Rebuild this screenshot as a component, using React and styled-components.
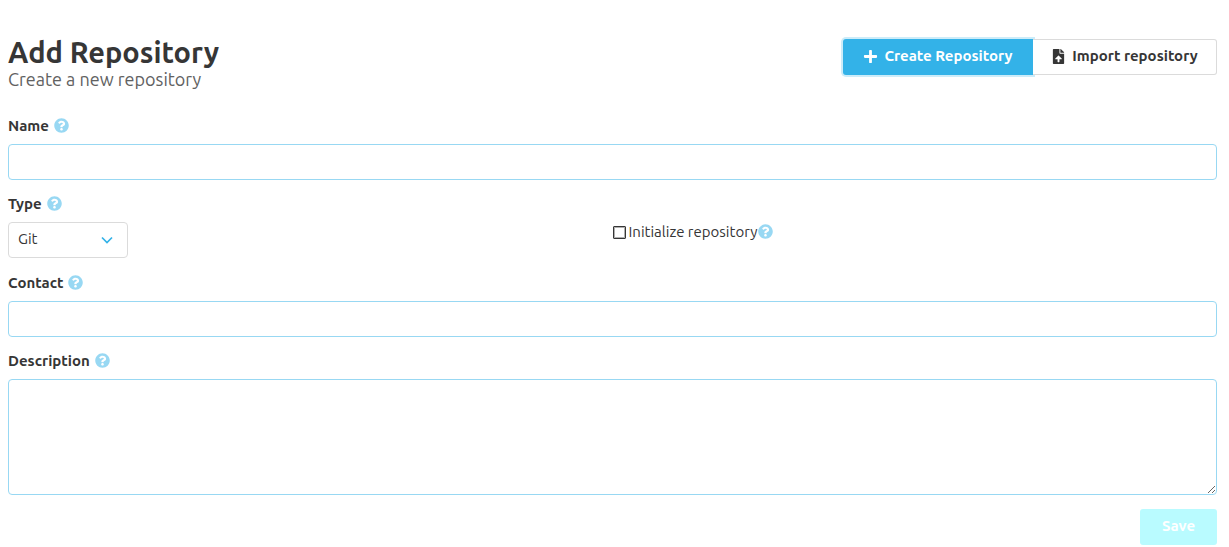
import React from "react";
import styled, { createGlobalStyle } from "styled-components";
import { FaPlus, FaFileUpload, FaQuestionCircle } from "react-icons/fa";

const GlobalStyle = createGlobalStyle`
  *, *::before, *::after { box-sizing: border-box; }
  body {
    margin: 0;
    background: #fff;
    color: #363636;
    font-family: Ubuntu, "Noto Sans", "Open Sans", sans-serif;
    font-size: 15px;
    line-height: 20px;
  }
  button, input, select, textarea { font: inherit; color: inherit; margin: 0; }
`;

const Page = styled.main`
  padding: 36px 12px 2px 8px;
`;

const Header = styled.header`
  display: flex;
  justify-content: space-between;
  align-items: flex-start;
  margin-bottom: 26px;
`;

const Title = styled.h1`
  margin: 0;
  font-size: 29px;
  line-height: 32px;
  font-weight: 700;
`;

const Subtitle = styled.p`
  margin: 0;
  font-size: 18px;
  line-height: 22px;
  color: #616161;
`;

const Tabs = styled.div`
  display: flex;
  padding-top: 3px;
`;

const Button = styled.button`
  display: inline-flex;
  align-items: center;
  justify-content: center;
  gap: 6px;
  height: 36px;
  min-width: ${(p) => p.$width};
  padding: 0 14px 2px;
  border: 1px solid transparent;
  border-radius: 3px;
  font-weight: 700;
  white-space: nowrap;
`;

const CreateTab = styled(Button)`
  border-radius: 3px 0 0 3px;
  background: #33b2e8;
  color: #fff;
  box-shadow: 0 0 0 2px rgba(51, 178, 232, 0.25);
`;

const ImportTab = styled(Button)`
  border-radius: 0 3px 3px 0;
  border-color: #dbdbdb;
  border-left: 0;
  background: #fff;
`;

const SaveButton = styled(Button)`
  background: #b9fbff;
  color: #fff;
`;

const Form = styled.form`
  display: flex;
  flex-direction: column;
  gap: 14px;
`;

const Field = styled.div`
  display: flex;
  flex-direction: column;
  gap: 8px;
`;

const LabelRow = styled.div`
  display: flex;
  align-items: center;
  gap: 5px;
`;

const Label = styled.label`
  font-weight: 700;
`;

const HelpIcon = styled(FaQuestionCircle)`
  flex: none;
  width: 15px;
  height: 15px;
  margin-bottom: 1px;
  color: #98d8f3;
`;

const TextInput = styled.input`
  width: 100%;
  height: 36px;
  padding: 0 10px;
  border: 1px solid #98d8f3;
  border-radius: 4px;
  background: #fff;
`;

const TextArea = styled.textarea`
  display: block;
  width: 100%;
  height: 116px;
  padding: 10px;
  border: 1px solid #98d8f3;
  border-radius: 4px;
  background: #fff;
  resize: vertical;
`;

const TypeRow = styled.div`
  display: grid;
  grid-template-columns: 1fr 1fr;
  min-height: 37px;
`;

const SelectBox = styled.div`
  display: grid;
  width: 120px;
  align-items: center;
  align-self: start;

  > * { grid-area: 1 / 1; }
`;

const Select = styled.select`
  appearance: none;
  width: 100%;
  height: 36px;
  padding: 0 35px 2px 9px;
  border: 1px solid #dbdbdb;
  border-radius: 4px;
  background: #fff;
`;

const Chevron = styled.svg`
  justify-self: end;
  margin-right: 14px;
  pointer-events: none;
`;

const CheckRow = styled.div`
  display: flex;
  align-items: center;
  align-self: start;
  gap: 1px;
  height: 20px;
`;

const CheckLabel = styled.label`
  display: flex;
  align-items: center;
  gap: 3px;
`;

const Checkbox = styled.input`
  appearance: none;
  flex: none;
  width: 13px;
  height: 13px;
  border: 1px solid #363636;
  border-radius: 1px;
  box-shadow: inset 0 0 0 1px rgba(54, 54, 54, 0.4);

  &:checked { background: #33b2e8; }
`;

const Actions = styled.div`
  display: flex;
  justify-content: flex-end;
`;

function FieldLabel({ htmlFor, children }) {
  return (
    <LabelRow>
      <Label htmlFor={htmlFor}>{children}</Label>
      <HelpIcon aria-hidden="true" />
    </LabelRow>
  );
}

export default function App() {
  return (
    <>
      <GlobalStyle />
      <Page>
        <Header>
          <div>
            <Title>Add Repository</Title>
            <Subtitle>Create a new repository</Subtitle>
          </div>
          <Tabs>
            <CreateTab type="button" $width="190px">
              <FaPlus size={15} aria-hidden="true" />
              Create Repository
            </CreateTab>
            <ImportTab type="button" $width="184px">
              <FaFileUpload size={15} aria-hidden="true" />
              Import repository
            </ImportTab>
          </Tabs>
        </Header>
        <Form onSubmit={(e) => e.preventDefault()}>
          <Field>
            <FieldLabel htmlFor="name">Name</FieldLabel>
            <TextInput id="name" type="text" />
          </Field>
          <Field>
            <FieldLabel htmlFor="type">Type</FieldLabel>
            <TypeRow>
              <SelectBox>
                <Select id="type" defaultValue="git">
                  <option value="git">Git</option>
                </Select>
                <Chevron width="14" height="10" viewBox="0 0 14 10" aria-hidden="true">
                  <path d="M2 2.5 7 7.5 12 2.5" fill="none" stroke="#33b2e8" strokeWidth="1.7" />
                </Chevron>
              </SelectBox>
              <CheckRow>
                <CheckLabel>
                  <Checkbox type="checkbox" />
                  Initialize repository
                </CheckLabel>
                <HelpIcon aria-hidden="true" />
              </CheckRow>
            </TypeRow>
          </Field>
          <Field>
            <FieldLabel htmlFor="contact">Contact</FieldLabel>
            <TextInput id="contact" type="text" />
          </Field>
          <Field>
            <FieldLabel htmlFor="description">Description</FieldLabel>
            <TextArea id="description" />
          </Field>
          <Actions>
            <SaveButton type="submit" $width="77px">Save</SaveButton>
          </Actions>
        </Form>
      </Page>
    </>
  );
}
